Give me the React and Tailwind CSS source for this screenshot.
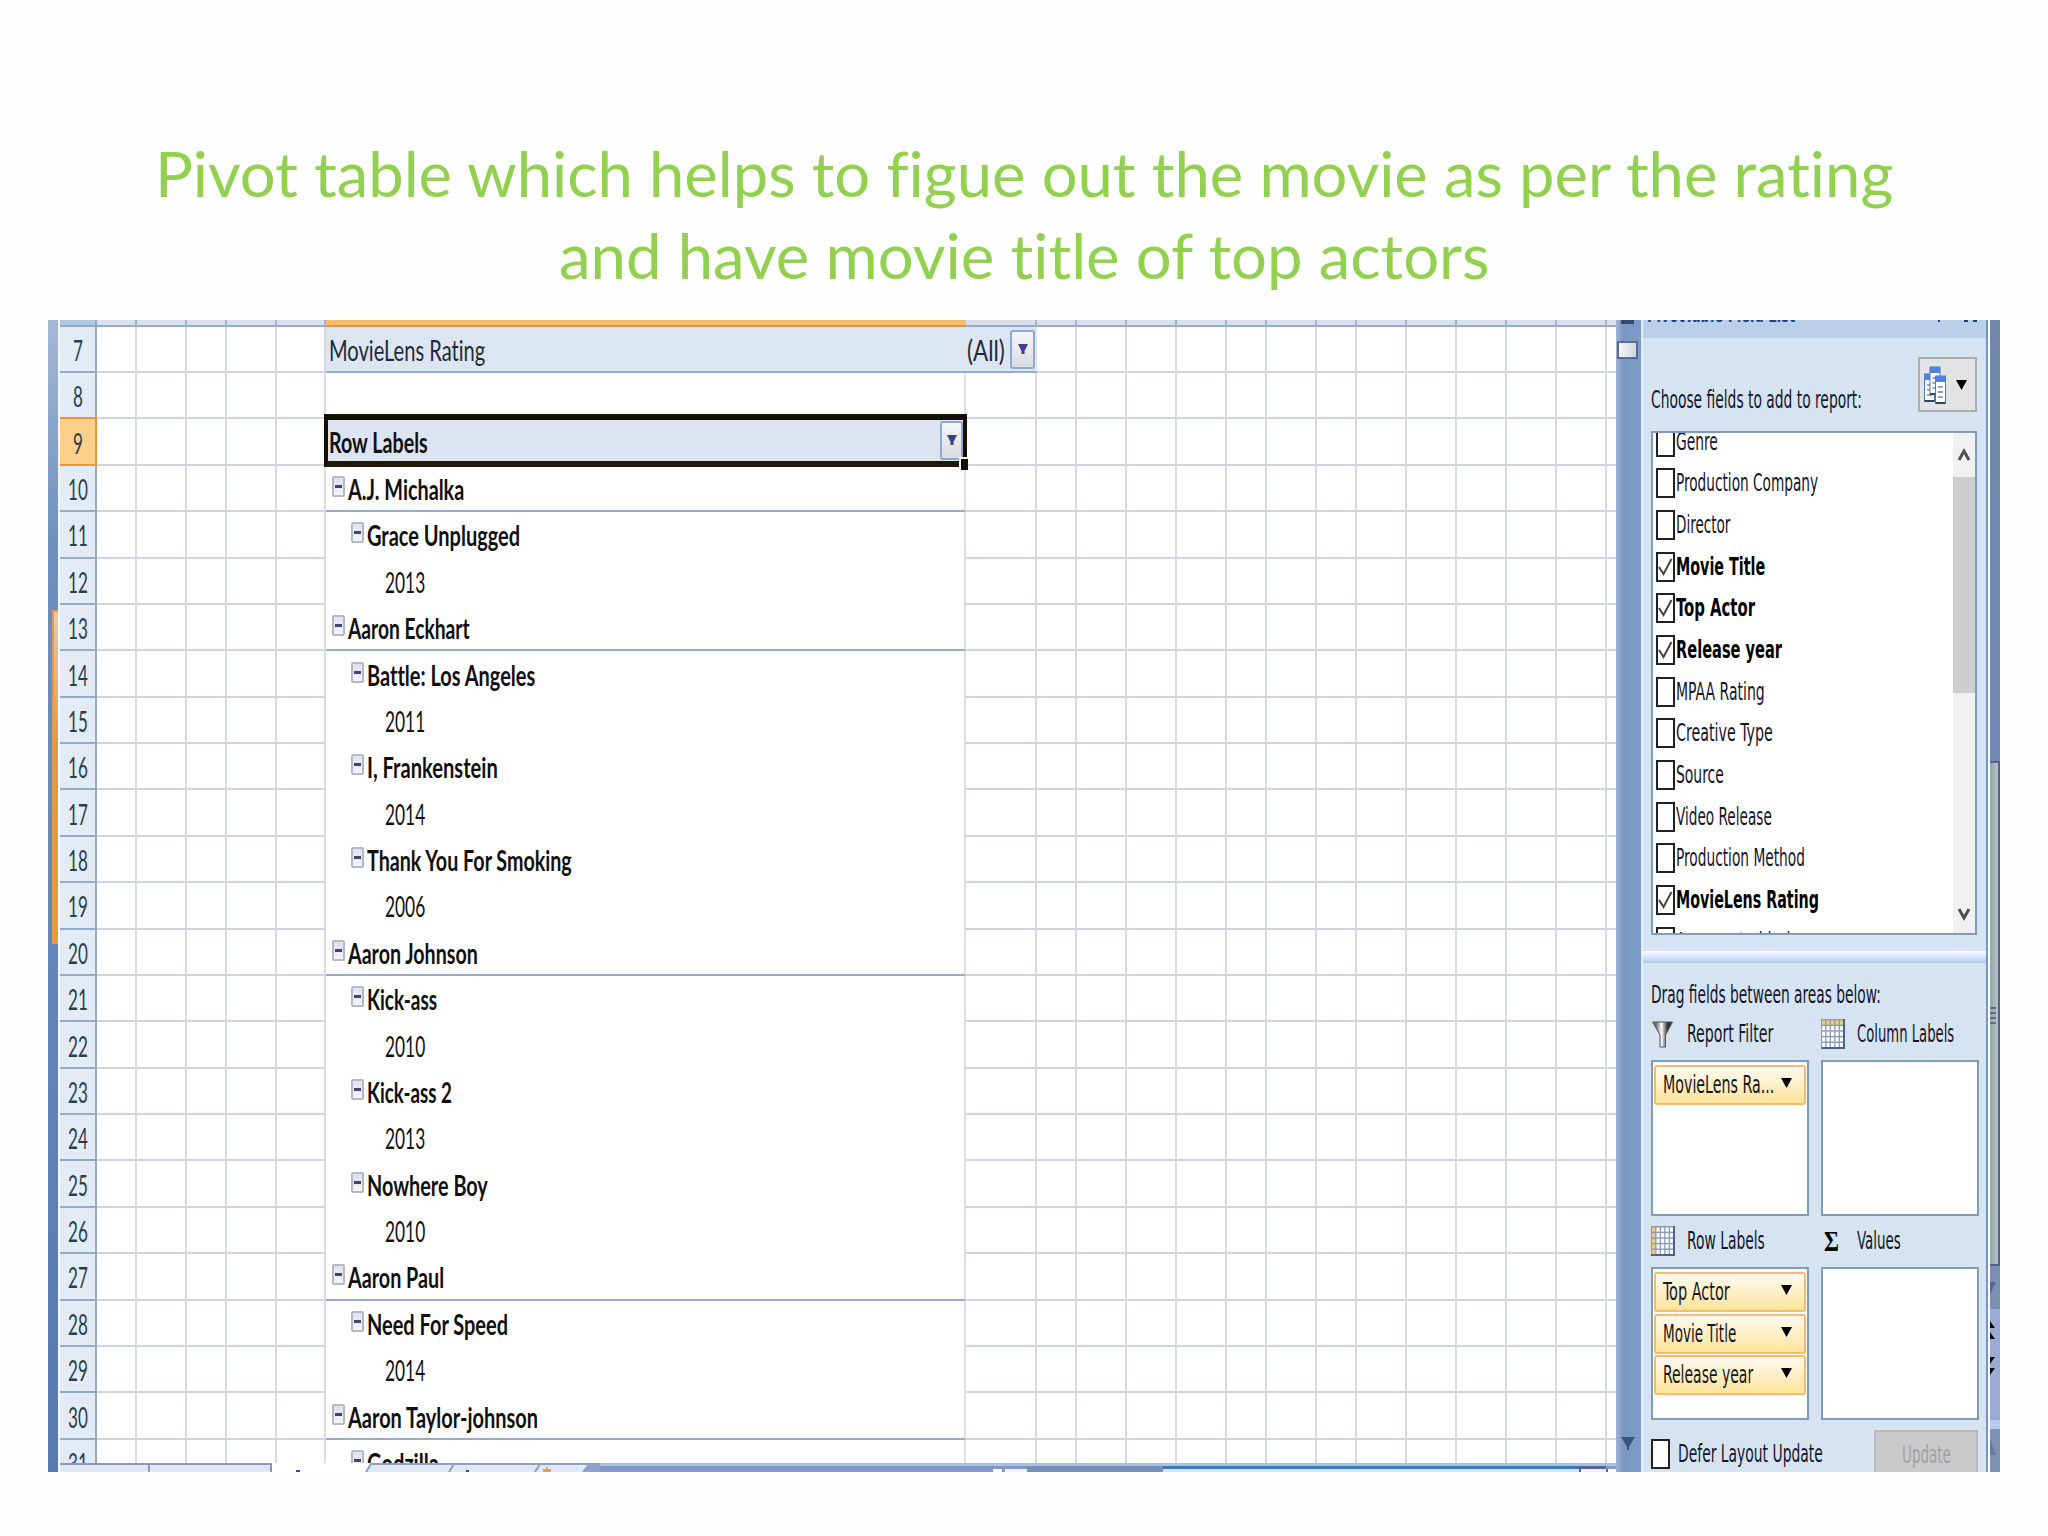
import { useLayoutEffect, useRef, useState } from 'react';
import clsx from 'clsx';

const ROWS = [
  { n: 8 },
  { n: 9, label: 'Row Labels', w: 99, selected: true },
  { n: 10, label: 'A.J. Michalka', w: 116, level: 0 },
  { n: 11, label: 'Grace Unplugged', w: 153, level: 1 },
  { n: 12, label: '2013', w: 40, level: 2 },
  { n: 13, label: 'Aaron Eckhart', w: 122, level: 0 },
  { n: 14, label: 'Battle: Los Angeles', w: 168, level: 1 },
  { n: 15, label: '2011', w: 40, level: 2 },
  { n: 16, label: 'I, Frankenstein', w: 131, level: 1 },
  { n: 17, label: '2014', w: 40, level: 2 },
  { n: 18, label: 'Thank You For Smoking', w: 205, level: 1 },
  { n: 19, label: '2006', w: 40, level: 2 },
  { n: 20, label: 'Aaron Johnson', w: 130, level: 0 },
  { n: 21, label: 'Kick-ass', w: 70, level: 1 },
  { n: 22, label: '2010', w: 40, level: 2 },
  { n: 23, label: 'Kick-ass 2', w: 85, level: 1 },
  { n: 24, label: '2013', w: 40, level: 2 },
  { n: 25, label: 'Nowhere Boy', w: 121, level: 1 },
  { n: 26, label: '2010', w: 40, level: 2 },
  { n: 27, label: 'Aaron Paul', w: 96, level: 0 },
  { n: 28, label: 'Need For Speed', w: 141, level: 1 },
  { n: 29, label: '2014', w: 40, level: 2 },
  { n: 30, label: 'Aaron Taylor-johnson', w: 190, level: 0 },
  { n: 31, label: 'Godzilla', w: 72, level: 1 },
];

const FIELDS = [
  { name: 'Genre', w: 42 },
  { name: 'Production Company', w: 142 },
  { name: 'Director', w: 54 },
  { name: 'Movie Title', w: 89, checked: true },
  { name: 'Top Actor', w: 79, checked: true },
  { name: 'Release year', w: 106, checked: true },
  { name: 'MPAA Rating', w: 89 },
  { name: 'Creative Type', w: 97 },
  { name: 'Source', w: 48 },
  { name: 'Video Release', w: 96 },
  { name: 'Production Method', w: 129 },
  { name: 'MovieLens Rating', w: 143, checked: true },
  { name: 'Aggregated index', w: 132 },
];

const LEFT_COLS = [40, 50, 40, 50, 49];
const RIGHT_COLS = [71, 40, 50, 50, 50, 40, 50, 40, 50, 50, 50, 50, 50];

// Text squeezed horizontally to a given width
function Fit({ w, className, children }) {
  const ref = useRef(null);
  const [scale, setScale] = useState(1);

  useLayoutEffect(() => {
    setScale(w / ref.current.offsetWidth);
  }, [w]);

  return (
    <span className="block shrink-0 whitespace-nowrap" style={{ width: w }}>
      <span
        ref={ref}
        className={clsx('inline-block origin-left whitespace-nowrap', className)}
        style={{ transform: `scaleX(${scale})` }}
      >
        {children}
      </span>
    </span>
  );
}

function Cells({ cols, header }) {
  return cols.map((w, i) => (
    <div
      key={i}
      className={clsx(
        'shrink-0 border-r-2',
        header ? 'border-r-[#a3b4cb] border-b-2 border-b-[#93abce] bg-[#d8e0ec]' : 'border-r-[#d8dae4] border-b-2 border-b-[#d1d4e2]'
      )}
      style={{ width: w }}
    />
  ));
}

function DropButton({ className }) {
  return (
    <div className={clsx('flex items-center justify-center rounded-[3px] border-2 border-[#8ea9cf] bg-linear-to-b from-[#f6f7f9] to-[#d9dce0]', className)}>
      <svg width="10" height="11" viewBox="0 0 10 11">
        <path d="M0 0H10L6.5 7V10H3.5V7Z" fill="#3d3f8c" />
      </svg>
    </div>
  );
}

function Collapse() {
  return (
    <div className="mb-[5px] flex h-[21px] w-[13px] shrink-0 items-center justify-center rounded-[2px] border-2 border-[#b3b9c9] bg-linear-to-b from-[#dfe2e9] to-[#f4f4f6]">
      <div className="h-[3px] w-[7px] shrink-0 bg-[#44427a]" />
    </div>
  );
}

function RowNumber({ n, selected }) {
  return (
    <div
      className={clsx(
        'flex w-[37px] shrink-0 items-center justify-center border-r-2 border-b-2 pt-[2px] text-[#26404a]',
        selected ? 'border-[#ee9436] bg-[#fcd08a] shadow-[0_-2px_0_#ee9436]' : 'border-r-[#93a9c4] border-b-[#93abc8] bg-[#e3ebf6]'
      )}
    >
      <Fit w={n < 10 ? 10 : 20}>{n}</Fit>
    </div>
  );
}

function PivotCell({ row }) {
  const { label, w, level, selected } = row;
  if (selected) {
    return (
      <div className="relative w-[640px] shrink-0">
        <div className="absolute -top-[5px] -left-[2px] flex h-[53px] w-[643px] items-center border-4 border-t-[6px] border-b-[6px] border-[#150f05] border-b-[#1f1707] bg-[#dce4f1] pl-px">
          <Fit w={w} className="pt-[2px] font-bold text-[#101010]">
            {label}
          </Fit>
          <DropButton className="ml-auto h-[39px] w-[23px]" />
          <div className="absolute -right-[5px] -bottom-[9px] h-[13px] w-[9px] border-t-2 border-l-2 border-white bg-[#150f05]" />
        </div>
      </div>
    );
  }
  return (
    <div
      className={clsx(
        'flex w-[640px] shrink-0 items-center border-r-2 border-r-[#dcdee6] pt-[2px]',
        level === undefined && 'border-b-2 border-b-[#d1d4e2]',
        level === 0 && 'border-b-2 border-b-[#93add0] pl-[6px]',
        level === 1 && 'pb-[2px] pl-[25px]',
        level === 2 && 'pb-[2px] pl-[56px]'
      )}
    >
      {(level === 0 || level === 1) && <Collapse />}
      {label && (
        <Fit w={w} className={clsx('ml-[3px] text-[#101010]', level < 2 && 'font-bold')}>
          {label}
        </Fit>
      )}
    </div>
  );
}

function Sheet() {
  return (
    <div className="flex w-[1556px] shrink-0 flex-col">
      <div className="h-[1143px] overflow-hidden font-['Lato',sans-serif] text-[29px] leading-[40px] [font-variant-ligatures:none]">
        <div className="flex h-[6.7px]">
          <div className="w-[37px] shrink-0 border-r-2 border-b-2 border-[#8fa9ce] bg-[#b0c8e6]" />
          <Cells cols={LEFT_COLS} header />
          <div className="w-[640px] shrink-0 border-b-2 border-[#e8933c] bg-[#f6bd68]" />
          <Cells cols={RIGHT_COLS} header />
          <div className="grow border-b-2 border-[#93abce] bg-[#d8e0ec]" />
        </div>
        <div className="flex h-[46.39px]">
          <RowNumber n={7} />
          <Cells cols={LEFT_COLS} />
          <div className="flex w-[711px] shrink-0 items-center border-b-2 border-[#8fadd8] bg-[#dce5f2] pt-[2px] pl-[3px]">
            <Fit w={156} className="text-[#222a35]">MovieLens Rating</Fit>
            <div className="mr-[2px] ml-auto flex items-center gap-[5px]">
              <Fit w={38} className="text-[#222a35]">(All)</Fit>
              <DropButton className="-mt-px h-[39px] w-[25px]" />
            </div>
          </div>
          <Cells cols={RIGHT_COLS.slice(1)} />
          <div className="grow border-b-2 border-[#d1d4e2]" />
        </div>
        {ROWS.map((row) => (
          <div key={row.n} className="flex h-[46.39px]">
            <RowNumber n={row.n} selected={row.selected} />
            <Cells cols={LEFT_COLS} />
            <PivotCell row={row} />
            <Cells cols={RIGHT_COLS} />
            <div className="grow border-b-2 border-[#d1d4e2]" />
          </div>
        ))}
      </div>
      <SheetTabs />
    </div>
  );
}

function SheetTabs() {
  return (
    <div className="flex h-[9px]">
      <svg width="540" height="9" viewBox="0 0 540 9" className="shrink-0">
        <rect width="540" height="9" fill="#dfe8f5" />
        <path d="M0 1H211V9M89 1V9" stroke="#8d97bb" strokeWidth="2" fill="none" />
        <path d="M212 0H312L306 9H212Z" fill="#ffffff" />
        <path d="M306 9L311 1H540M389 9L394 1M475 9L480 1" stroke="#8d9fc4" strokeWidth="2" fill="none" />
        <path d="M522 9L528 1H540V9Z" fill="#8c9fce" />
        <path d="M236 7h4v2h-4zM406 7h3v2h-3z" fill="#2353a0" />
        <path d="M483 6h8v3h-8zM486 4h2v2h-2z" fill="#dfa14c" />
      </svg>
      <div className="flex grow border-t-[3px] border-[#a6c3e4] bg-[#8497c8]">
        <div className="w-[393px] shrink-0" />
        <div className="mt-[3px] w-[9px] shrink-0 bg-white" />
        <div className="mt-[3px] ml-[3px] w-[22px] shrink-0 bg-[#f1f3f7]" />
        <div className="w-[136px] shrink-0 bg-[#7890b8]" />
        <div className="w-[416px] shrink-0 border-t-[3px] border-[#4078b4] bg-[#d3e6f8]" />
        <div className="grow border-t-[3px] border-l-2 border-[#56649a] bg-[#eef0f5]" />
        <div className="mt-[3px] w-[10px] shrink-0 border-l-2 border-[#56649a] bg-white" />
      </div>
    </div>
  );
}

function SheetScrollbar() {
  return (
    <div className="flex w-[25px] shrink-0 flex-col bg-linear-to-r from-[#a4b1dd] via-[#7799c1] via-30% to-[#7b9cc6]">
      <div className="ml-[5px] h-[4px] w-[13px] bg-[#35496e]" />
      <div className="mt-[17px] ml-px h-[18px] w-[21px] border-2 border-[#5c6c90] bg-linear-to-r from-[#f5f7fb] to-[#ccd5e4]" />
      <svg width="14" height="13" viewBox="0 0 14 13" className="mt-auto mb-[22px] ml-[5px]">
        <path d="M0 0H14L8 10V13H6V10Z" fill="#3c5180" />
      </svg>
    </div>
  );
}

function CheckBox({ checked }) {
  return (
    <div className="h-[30px] w-[19px] shrink-0 border-2 border-[#252020] bg-white">
      {checked && (
        <svg width="15" height="26" viewBox="0 0 15 26">
          <path d="M1 13L5.500 20L13.500 5" stroke="#444" strokeWidth="2" fill="none" />
        </svg>
      )}
    </div>
  );
}

function Triangle() {
  return (
    <svg width="11" height="10" viewBox="0 0 11 10" className="shrink-0">
      <path d="M0 0H11L5.500 10Z" fill="#000" />
    </svg>
  );
}

function FieldList() {
  return (
    <div className="mt-[19px] ml-[8px] flex h-[504px] min-h-[504px] w-[326px] overflow-hidden border-2 border-[#7f9db9] bg-white">
      <div className="-mt-[6.400px] flex w-[300px] shrink-0 flex-col pl-[3px]">
        {FIELDS.map((f) => (
          <div key={f.name} className="flex h-[41.700px] shrink-0 items-start gap-px">
            <CheckBox checked={f.checked} />
            <Fit w={f.w} className={clsx('leading-[27px]', f.checked ? 'font-bold text-black' : 'text-[#15152b]')}>
              {f.name}
            </Fit>
          </div>
        ))}
      </div>
      <div className="flex w-[22px] flex-col items-center bg-[#f0f0f0]">
        <svg width="22" height="44" viewBox="0 0 22 44" className="shrink-0">
          <path d="M6 27L11 18L16 27" stroke="#505050" strokeWidth="3" fill="none" />
        </svg>
        <div className="h-[216px] w-full shrink-0 bg-[#cdcdcf]" />
        <svg width="22" height="30" viewBox="0 0 22 30" className="mt-auto">
          <path d="M6 6L11 15L16 6" stroke="#505050" strokeWidth="3" fill="none" />
        </svg>
      </div>
    </div>
  );
}

function Chip({ w, children }) {
  return (
    <div className="flex h-[40px] w-[152px] items-center justify-between rounded-[3px] border-2 border-[#f6bb6c] bg-linear-to-b from-[#fffaf0] to-[#fde49a] pr-[12px] pl-[7px]">
      <Fit w={w} className="text-[#15151b]">{children}</Fit>
      <div className="mb-[4px]">
        <Triangle />
      </div>
    </div>
  );
}

function Area({ icon, title, w, boxClass, children }) {
  return (
    <div className="w-[158px]">
      <div className="flex h-[34px] items-center">
        <div className="flex w-[36px] shrink-0">{icon}</div>
        <Fit w={w}>{title}</Fit>
      </div>
      <div className={clsx('flex flex-col gap-[1.700px] border-2 border-[#7f9db9] bg-white px-px', boxClass)}>{children}</div>
    </div>
  );
}

function GridIcon({ rows }) {
  return (
    <svg width="24" height="30" viewBox="0 0 24 30">
      <rect width="24" height="30" fill="#8c9bb4" />
      {[0, 1, 2, 3, 4].map((r) =>
        [0, 1, 2, 3, 4].map((c) => (
          <rect
            key={`${r}-${c}`}
            x={1 + c * 4.5}
            y={1.5 + r * 5.6}
            width="3.2"
            height="4.2"
            fill={(rows ? c === 0 : r === 0) ? '#f0cc72' : '#f8faff'}
          />
        ))
      )}
      <path d="M23 0V29H0" stroke="#4b6488" strokeWidth="2" fill="none" />
    </svg>
  );
}

function FunnelIcon() {
  return (
    <svg width="22" height="27" viewBox="0 0 22 27" className="ml-px">
      <defs>
        <linearGradient id="funnel">
          <stop offset="0.2" stopColor="#777" />
          <stop offset="0.45" stopColor="#fff" />
          <stop offset="0.75" stopColor="#333" />
        </linearGradient>
      </defs>
      <path d="M0.500 1H20.500L13.500 14V26H8V14Z" fill="url(#funnel)" stroke="#555" />
    </svg>
  );
}

function LayoutIcon() {
  return (
    <svg width="22" height="38" viewBox="0 0 22 38">
      {[[0.5, 8], [6, 1], [11.5, 10]].map(([x, y]) => (
        <g key={x}>
          <rect x={x} y={y} width="10" height="27" fill="#fff" stroke="#5377ad" />
          <rect x={x} y={y} width="10" height="6" fill="#4f83df" />
          <path d={`M${x + 2.5} ${y + 11}h5m-5 5h5m-5 5h5`} stroke="#7088a8" strokeWidth="1.500" />
          <path d={`M${x} ${y + 27}h10`} stroke="#32445f" strokeWidth="2" />
        </g>
      ))}
    </svg>
  );
}

function FieldPane() {
  return (
    <div className="flex w-[347px] shrink-0 flex-col overflow-hidden border-r-2 border-l-2 border-r-[#6f96d2] border-l-[#e2ecfa] bg-[#d6e4f2] font-['DejaVu_Sans_Condensed','DejaVu_Sans',sans-serif] text-[24.500px] leading-[30px] text-[#15152b]">
      <div className="flex h-[18px] shrink-0 items-end overflow-hidden bg-[#bad0e9] pr-[9px] pb-[9px] pl-[4px] font-bold text-[#1b4288]">
        <Fit w={148} className="leading-[22px]">PivotTable Field List</Fit>
        <svg width="40" height="9" viewBox="0 0 40 9" className="ml-auto">
          <path d="M1 0h2v2H1zM27 0h4v2h-4zM36 0h4v2h-4z" fill="#1b4288" />
        </svg>
      </div>
      <div className="mt-[19px] flex h-[55px] shrink-0 justify-between pr-[9px] pl-[8px]">
        <Fit w={211} className="mt-[28px]">Choose fields to add to report:</Fit>
        <div className="flex w-[59px] items-center justify-between border-2 border-[#a9adb1] bg-[#e2e3e4] pr-[8px] pl-[4px]">
          <LayoutIcon />
          <Triangle />
        </div>
      </div>
      <FieldList />
      <div className="mt-[16px] h-[12px] shrink-0 bg-linear-to-b from-white to-[#a9c8f8]" />
      <div className="mt-[17px] ml-[8px] h-[37px] shrink-0">
        <Fit w={230}>Drag fields between areas below:</Fit>
      </div>
      <div className="ml-[8px] grid shrink-0 grid-cols-[158px_158px] gap-x-[12px] gap-y-[8px]">
        <Area icon={<FunnelIcon />} title="Report Filter" w={86} boxClass="mt-[9px] h-[156px] pt-[3px]">
          <Chip w={111}>MovieLens Ra...</Chip>
        </Area>
        <Area icon={<GridIcon />} title="Column Labels" w={97} boxClass="mt-[9px] h-[156px]" />
        <Area icon={<GridIcon rows />} title="Row Labels" w={78} boxClass="mt-[9px] h-[153px] pt-[3px]">
          <Chip w={67}>Top Actor</Chip>
          <Chip w={73}>Movie Title</Chip>
          <Chip w={90}>Release year</Chip>
        </Area>
        <Area
          icon={<span className="pl-[3px] font-['Liberation_Serif',serif] text-[29px] font-bold text-black"><Fit w={15}>Σ</Fit></span>}
          title="Values"
          w={44}
          boxClass="mt-[9px] h-[153px]"
        />
      </div>
      <div className="mt-[10px] flex shrink-0 pr-[8px] pl-[8px]">
        <div className="mt-[9px]">
          <CheckBox />
        </div>
        <Fit w={145} className="mt-[9px] ml-[8px]">Defer Layout Update</Fit>
        <div className="ml-auto flex h-[50px] w-[104px] justify-center border-2 border-[#b8babb] bg-[#cacaca] pt-[8px] text-[#a2a2a2]">
          <Fit w={49}>Update</Fit>
        </div>
      </div>
    </div>
  );
}

function OuterEdge() {
  return (
    <div className="flex w-[12px] shrink-0 flex-col overflow-hidden border-l-2 border-white bg-[#7389ae]">
      <div className="h-[441px] shrink-0 bg-linear-to-b from-[#7087ab] to-[#7289b5]" />
      <div className="h-[505px] shrink-0 border-t-2 border-r-2 border-b-2 border-[#56608e] bg-linear-to-r from-[#91a5ab] to-[#b4c2c5] pt-[244px]">
        <div className="flex h-[17px] w-[6px] flex-col justify-between">
          <div className="h-[2px] bg-[#5d707c]" />
          <div className="h-[2px] bg-[#5d707c]" />
          <div className="h-[2px] bg-[#5d707c]" />
          <div className="h-[2px] bg-[#5d707c]" />
        </div>
      </div>
      <svg width="10" height="206" viewBox="0 0 10 206" className="shrink-0">
        <rect width="10" height="43" fill="#7a90b0" />
        <path d="M0 16H6L0 28Z" fill="#516790" />
        <rect y="43" width="10" height="111" fill="#9aaad5" />
        <path d="M0 55L5 62H0ZM0 66L5 73H0ZM0 91H5L0 98ZM0 102H5L0 109Z" fill="#000" />
        <rect y="154" width="10" height="9" fill="#b7c9ed" />
        <rect y="163" width="10" height="43" fill="#7c93b3" />
        <path d="M0 173L6 189H0Z" fill="#647ba0" />
      </svg>
    </div>
  );
}

function App() {
  return (
    <div className="flex h-[1536px] w-[2048px] flex-col overflow-hidden bg-[#fefefe]">
      <h1 className="flex h-[320px] shrink-0 flex-col items-center pt-[132px] font-['Lato',sans-serif] text-[62px] leading-[82px] text-[#92d050] [font-variant-ligatures:none]">
        <Fit w={1738}>Pivot table which helps to figue out the movie as per the rating</Fit>
        <Fit w={930}>and have movie title of top actors</Fit>
      </h1>
      <div className="ml-[48px] flex h-[1152px] w-[1952px] shrink-0 overflow-hidden bg-white">
        <div className="flex w-[12px] shrink-0 flex-col border-r-2 border-[#f3f6fb] bg-linear-to-b from-[#a4b8d4] via-[#6f8fbd] via-20% to-[#5679b0]">
          <div className="mt-[290px] ml-[4px] h-[334px] border-2 border-r-0 border-[#e59a4b] bg-linear-to-b from-[#e2cdb0] via-[#d99a4e] via-40% to-[#e59a3c]" />
        </div>
        <Sheet />
        <SheetScrollbar />
        <FieldPane />
        <OuterEdge />
      </div>
    </div>
  );
}

export default App;
